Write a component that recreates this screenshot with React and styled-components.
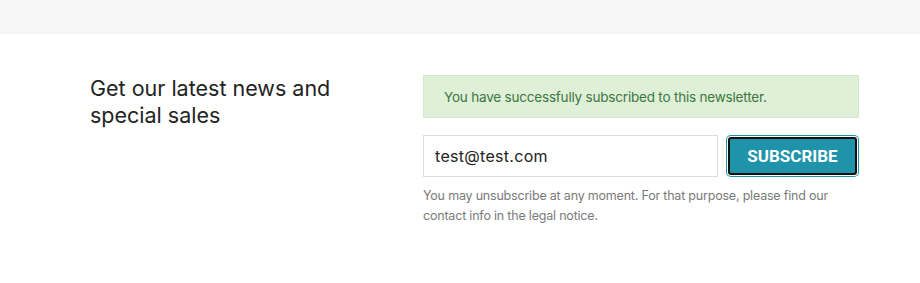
import styled, { createGlobalStyle } from "styled-components";

const GlobalStyle = createGlobalStyle`
  body {
    margin: 0;
    background: #fff;
    font-family: Inter, "Noto Sans", sans-serif;
  }
`;

const TopBand = styled.div`
  height: 34px;
  background: #f6f6f6;
`;

const Section = styled.section`
  display: flex;
  padding: 41px 61px 0 90px;
`;

const Heading = styled.h2`
  width: 270px;
  margin: 0 63px 0 0;
  font-size: 21.5px;
  font-weight: 400;
  line-height: 27px;
  letter-spacing: 0;
  color: #232323;
`;

const Form = styled.div`
  flex: 1;
  display: flex;
  flex-direction: column;
`;

const Alert = styled.div`
  height: 43px;
  box-sizing: border-box;
  display: flex;
  align-items: center;
  padding: 0 20px;
  background: #dff0d8;
  border: 1px solid #d0e9c6;
  color: #3c763d;
  font-size: 13.5px;
  letter-spacing: -0.2px;
`;

const Row = styled.div`
  display: flex;
  gap: 8px;
  margin-top: 17px;
`;

const EmailInput = styled.input`
  flex: 1;
  height: 42px;
  box-sizing: border-box;
  padding: 0 11px;
  border: 1px solid #dcdcdc;
  font-family: inherit;
  font-size: 16px;
  letter-spacing: 0.3px;
  color: #232323;
  outline: none;
`;

const Button = styled.button`
  width: 129px;
  height: 38px;
  margin: 2px 2px 0 2px;
  box-sizing: border-box;
  background: #1e93a9;
  border: 2px solid #111;
  border-radius: 3px;
  box-shadow: 0 0 0 1px #fff, 0 0 0 2px #1e93a9;
  color: #fff;
  font-family: Roboto, "Liberation Sans", sans-serif;
  font-size: 17px;
  font-weight: 700;
  letter-spacing: 0;
  text-transform: uppercase;
  cursor: pointer;
`;

const Note = styled.p`
  margin: 9px 0 0;
  font-size: 12.5px;
  line-height: 20px;
  color: #7a7a7a;
  letter-spacing: -0.2px;
`;

export default function App() {
  return (
    <>
      <GlobalStyle />
      <TopBand />
      <Section>
        <Heading>Get our latest news and special sales</Heading>
        <Form>
          <Alert>You have successfully subscribed to this newsletter.</Alert>
          <Row>
            <EmailInput defaultValue="test@test.com" />
            <Button>Subscribe</Button>
          </Row>
          <Note>
            You may unsubscribe at any moment. For that purpose, please find our
            <br />
            contact info in the legal notice.
          </Note>
        </Form>
      </Section>
    </>
  );
}
